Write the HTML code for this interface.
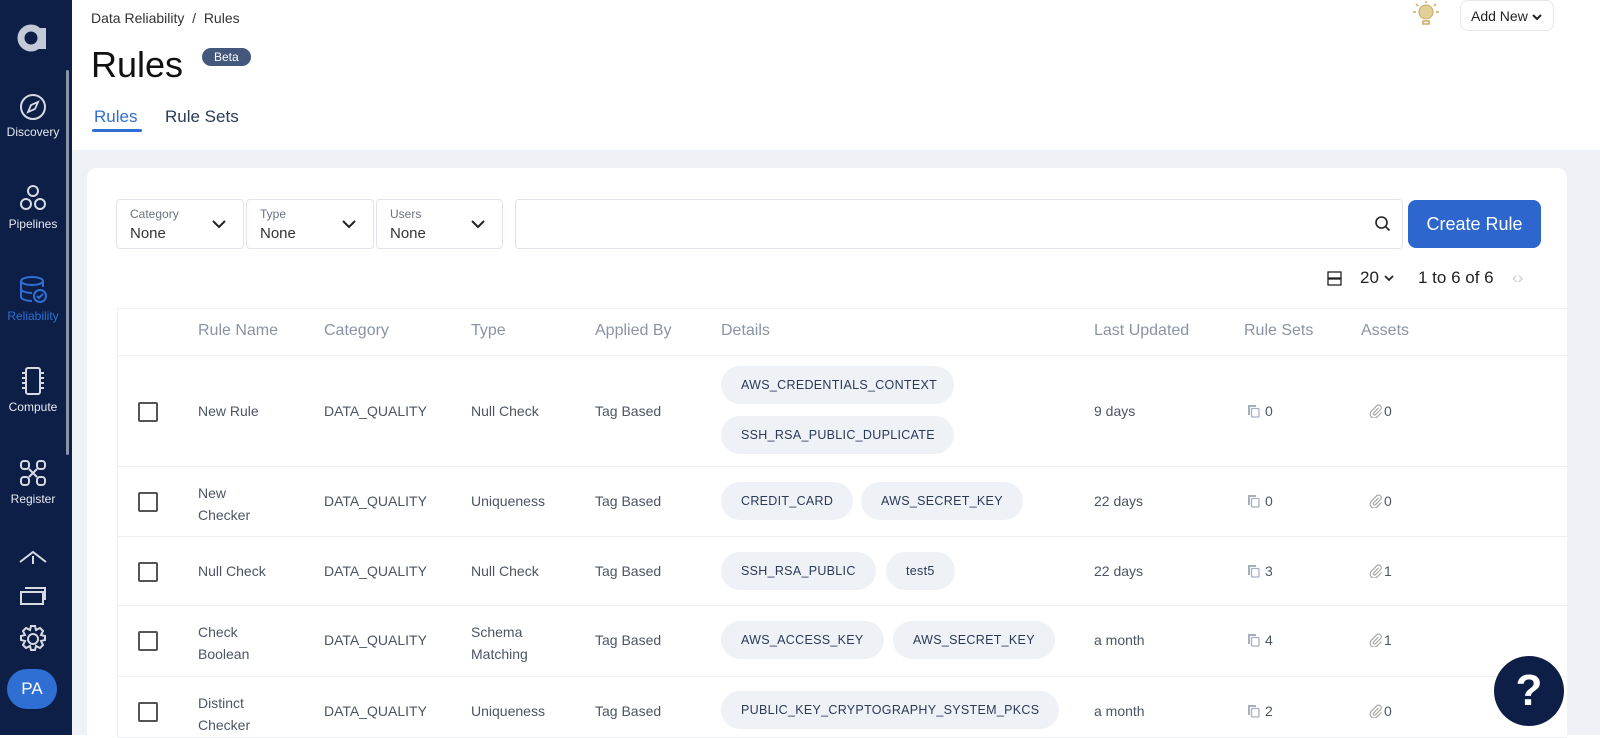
<!DOCTYPE html>
<html><head><meta charset="utf-8"><style>
*{box-sizing:border-box;margin:0;padding:0}
body{width:1600px;height:735px;overflow:hidden;font-family:"Liberation Sans",sans-serif;background:#fff;position:relative;color:#1f2937}
.sb{position:absolute;left:0;top:0;width:72px;height:735px;background:#0d1f47}
.sb .scroll{position:absolute;left:66px;top:70px;width:3px;height:385px;background:#8a93a8;border-radius:2px}
.nav{position:absolute;left:0;width:66px;text-align:center;color:#e6e9f0;font-size:12px}
.nav svg{display:block;margin:0 auto 4px}
.main{position:absolute;left:72px;top:0;right:0;bottom:0}
.bc{position:absolute;left:19px;top:10px;font-size:14px;color:#333}
h1{position:absolute;left:19px;top:44px;font-size:36px;font-weight:400;color:#111}
.beta{position:absolute;left:130px;top:48px;background:#44577d;color:#fff;font-size:12px;padding:2px 12px;border-radius:10px}
.tab{position:absolute;top:107px;font-size:17px;color:#2b3a55}
.grey{position:absolute;left:0;top:150px;right:0;bottom:0;background:#eef1f6}
.card{position:absolute;left:15px;top:18px;width:1480px;bottom:0;background:#fff;border-radius:10px 10px 0 0}
.sel{position:absolute;top:199px;height:50px;width:128px;border:1px solid #dfe3ea;border-radius:4px;background:#fff}
.sel .l{position:absolute;left:13px;top:7px;font-size:12px;color:#6b7280}
.sel .v{position:absolute;left:13px;top:25px;font-size:15px;color:#333}
.sel svg{position:absolute;right:16px;top:19px}
.abs{position:absolute}
.th{position:absolute;top:322px;font-size:16px;color:#8a93a3}
.row{position:absolute;left:117px;width:1450px;border-top:1px solid #eef0f4}
.c{position:absolute;font-size:14px;color:#4b5563}
.c svg{vertical-align:-2px;margin-right:4px}
.cb{position:absolute;left:138px;width:20px;height:20px;border:2px solid #555;border-radius:2px}
.pill{position:absolute;height:38px;border-radius:19px;background:#eef1f6;font-size:12.5px;color:#2b3a55;line-height:38px;padding:0 20px;letter-spacing:.3px}
</style></head><body>
<svg width="0" height="0" style="position:absolute"><defs>
<symbol id="cp" viewBox="0 0 14 14"><path d="M3 1h6v2H3v8H1V1z" fill="#a7afbd"/><rect x="4.5" y="4.5" width="7.5" height="8.5" rx="1" fill="none" stroke="#a7afbd" stroke-width="1.3"/></symbol>
<symbol id="clip" viewBox="0 0 14 14"><path d="M9.5 4L4.5 9a1.3 1.3 0 0 0 1.8 1.8L11.6 5.5a2.7 2.7 0 0 0-3.8-3.8L2.3 7.2a4 4 0 0 0 5.7 5.7L12.5 8.5" fill="none" stroke="#a7a7a7" stroke-width="1.2"/></symbol>
</defs></svg>
<div class="sb">
<div class="scroll"></div>
<div class="nav" style="top:22px"><svg width="34" height="30" viewBox="0 0 34 30"><circle cx="15" cy="16" r="10" fill="none" stroke="#c3c9d6" stroke-width="7"/><rect x="23" y="6" width="7" height="21" fill="#c3c9d6"/></svg></div>
<div class="nav" style="top:93px"><svg width="28" height="28" viewBox="0 0 28 28"><circle cx="14" cy="14" r="12" fill="none" stroke="#d6dae3" stroke-width="2"/><path d="M19 9l-3 7-7 3 3-7z" fill="none" stroke="#d6dae3" stroke-width="1.8"/></svg>Discovery</div>
<div class="nav" style="top:183px"><svg width="30" height="30" viewBox="0 0 30 30"><circle cx="15" cy="8" r="5" fill="none" stroke="#d6dae3" stroke-width="2"/><circle cx="8" cy="21" r="5" fill="none" stroke="#d6dae3" stroke-width="2"/><circle cx="22" cy="21" r="5" fill="none" stroke="#d6dae3" stroke-width="2"/></svg>Pipelines</div>
<div class="nav" style="top:275px;color:#2f6fd4"><svg width="30" height="30" viewBox="0 0 30 30"><ellipse cx="14" cy="6" rx="11" ry="4" fill="none" stroke="#2f6fd4" stroke-width="2"/><path d="M3 6v16c0 2 5 4 11 4M25 6v6M3 14c0 2 5 4 11 4" fill="none" stroke="#2f6fd4" stroke-width="2"/><circle cx="22" cy="21" r="6" fill="none" stroke="#2f6fd4" stroke-width="2"/><path d="M19 21l2 2 4-4" fill="none" stroke="#2f6fd4" stroke-width="2"/></svg>Reliability</div>
<div class="nav" style="top:366px"><svg width="28" height="30" viewBox="0 0 28 30"><rect x="7" y="2" width="14" height="26" rx="2" fill="none" stroke="#d6dae3" stroke-width="2"/><path d="M3 7h4M3 12h4M3 17h4M3 22h4M21 7h4M21 12h4M21 17h4M21 22h4" stroke="#d6dae3" stroke-width="2"/></svg>Compute</div>
<div class="nav" style="top:458px"><svg width="30" height="30" viewBox="0 0 30 30"><rect x="3" y="3" width="8" height="8" rx="3" fill="none" stroke="#d6dae3" stroke-width="2"/><rect x="19" y="3" width="8" height="8" rx="3" fill="none" stroke="#d6dae3" stroke-width="2"/><rect x="3" y="19" width="8" height="8" rx="3" fill="none" stroke="#d6dae3" stroke-width="2"/><rect x="19" y="19" width="8" height="8" rx="3" fill="none" stroke="#d6dae3" stroke-width="2"/><path d="M11 11l8 8M19 11l-8 8" stroke="#d6dae3" stroke-width="2"/></svg>Register</div>
<div class="nav" style="top:548px"><svg width="30" height="20" viewBox="0 0 30 20"><path d="M2 14L15 4l13 10M15 8v8" fill="none" stroke="#d6dae3" stroke-width="2"/></svg></div>
<div class="nav" style="top:584px"><svg width="30" height="24" viewBox="0 0 30 24"><path d="M3 8h22v12H3zM7 4h20v12" fill="none" stroke="#d6dae3" stroke-width="2"/></svg></div>
<div class="nav" style="top:624px"><svg width="30" height="30" viewBox="0 0 30 30"><circle cx="15" cy="15" r="5" fill="none" stroke="#d6dae3" stroke-width="2"/><path d="M13 2h4l1 4 4-2 3 3-2 4 4 1v4l-4 1 2 4-3 3-4-2-1 4h-4l-1-4-4 2-3-3 2-4-4-1v-4l4-1-2-4 3-3 4 2z" fill="none" stroke="#d6dae3" stroke-width="2"/></svg></div>
<div class="abs" style="left:7px;top:669px;width:50px;height:40px;border-radius:20px;background:#2f6fd4;color:#fff;font-size:17px;text-align:center;line-height:40px">PA</div>
</div>
<div class="main">
<div class="bc">Data Reliability &nbsp;/&nbsp; Rules</div>
<h1>Rules</h1><div class="beta">Beta</div>
<div class="tab" style="left:22px;color:#2f6fd4">Rules</div>
<div class="abs" style="left:20px;top:129px;width:50px;height:3px;background:#2f6fd4;border-radius:2px"></div>
<div class="tab" style="left:93px">Rule Sets</div>
<svg class="abs" style="left:1340px;top:0" width="28" height="28" viewBox="0 0 28 28"><circle cx="14" cy="12" r="7" fill="#e3cf9a" stroke="#c9a95c"/><path d="M14 1v2M4 4l2 2M24 4l-2 2M1 12h3M24 12h3M11 21h6v3h-6z" stroke="#c9a95c" stroke-width="1.5" fill="none"/></svg>
<div class="abs" style="left:1388px;top:0;width:94px;height:31px;border:1px solid #e5e7eb;border-radius:8px;font-size:14px;line-height:30px;padding-left:10px;color:#222">Add New <svg width="10" height="8" style="vertical-align:0"><path d="M1 2l4 4 4-4" fill="none" stroke="#222" stroke-width="2"/></svg></div>
<div class="grey"><div class="card"></div></div>
</div>
<div class="sel" style="left:116px"><div class="l">Category</div><div class="v">None</div><svg width="16" height="10"><path d="M2 2l6 6 6-6" fill="none" stroke="#222" stroke-width="2"/></svg></div>
<div class="sel" style="left:246px"><div class="l">Type</div><div class="v">None</div><svg width="16" height="10"><path d="M2 2l6 6 6-6" fill="none" stroke="#222" stroke-width="2"/></svg></div>
<div class="sel" style="left:376px;width:127px"><div class="l">Users</div><div class="v">None</div><svg width="16" height="10"><path d="M2 2l6 6 6-6" fill="none" stroke="#222" stroke-width="2"/></svg></div>
<div class="abs" style="left:515px;top:199px;width:888px;height:50px;border:1px solid #dfe3ea;border-radius:4px"><svg class="abs" style="right:10px;top:15px" width="18" height="18"><circle cx="7.5" cy="7.5" r="5.5" fill="none" stroke="#222" stroke-width="1.6"/><path d="M11.5 11.5l4 4" stroke="#222" stroke-width="1.6"/></svg></div>
<div class="abs" style="left:1408px;top:200px;width:133px;height:48px;background:#2d66cc;border-radius:8px;color:#fff;font-size:18px;text-align:center;line-height:48px">Create Rule</div>
<svg class="abs" style="left:1327px;top:271px" width="16" height="16"><rect x="1" y="1" width="13" height="6" fill="none" stroke="#222" stroke-width="1.3"/><rect x="1" y="8" width="13" height="6" fill="none" stroke="#222" stroke-width="1.3"/></svg>
<div class="c abs" style="left:1360px;top:268px;font-size:17px;color:#222">20 <svg width="10" height="8" style="vertical-align:1px"><path d="M1 2l4 4 4-4" fill="none" stroke="#222" stroke-width="1.8"/></svg></div>
<div class="c abs" style="left:1418px;top:268px;font-size:17px;color:#222">1 to 6 of 6</div>
<div class="c abs" style="left:1512px;top:268px;font-size:17px;color:#ccc">‹›</div>
<div class="abs" style="left:117px;top:308px;width:1450px;height:430px;border:1px solid #eef0f4;border-right:none"></div>
<div class="th" style="left:198px">Rule Name</div><div class="th" style="left:324px">Category</div><div class="th" style="left:471px">Type</div><div class="th" style="left:595px">Applied By</div><div class="th" style="left:721px">Details</div><div class="th" style="left:1094px">Last Updated</div><div class="th" style="left:1244px">Rule Sets</div><div class="th" style="left:1361px">Assets</div>
<div class="row" style="top:355px"></div><div class="row" style="top:466px"></div><div class="row" style="top:536px"></div><div class="row" style="top:605px"></div><div class="row" style="top:676px"></div>

<div class="cb" style="top:402px"></div><div class="c" style="left:198px;top:403px">New Rule</div><div class="c" style="left:324px;top:403px">DATA_QUALITY</div><div class="c" style="left:471px;top:403px">Null Check</div><div class="c" style="left:595px;top:403px">Tag Based</div>
<div class="pill" style="left:721px;top:366px;width:233px">AWS_CREDENTIALS_CONTEXT</div><div class="pill" style="left:721px;top:416px;width:233px">SSH_RSA_PUBLIC_DUPLICATE</div>
<div class="c" style="left:1094px;top:403px">9 days</div>

<div class="cb" style="top:492px"></div><div class="c" style="left:198px;top:482px;line-height:22px">New<br>Checker</div><div class="c" style="left:324px;top:493px">DATA_QUALITY</div><div class="c" style="left:471px;top:493px">Uniqueness</div><div class="c" style="left:595px;top:493px">Tag Based</div>
<div class="pill" style="left:721px;top:482px">CREDIT_CARD</div><div class="pill" style="left:861px;top:482px">AWS_SECRET_KEY</div>
<div class="c" style="left:1094px;top:493px">22 days</div>

<div class="cb" style="top:562px"></div><div class="c" style="left:198px;top:563px">Null Check</div><div class="c" style="left:324px;top:563px">DATA_QUALITY</div><div class="c" style="left:471px;top:563px">Null Check</div><div class="c" style="left:595px;top:563px">Tag Based</div>
<div class="pill" style="left:721px;top:552px">SSH_RSA_PUBLIC</div><div class="pill" style="left:886px;top:552px">test5</div>
<div class="c" style="left:1094px;top:563px">22 days</div>

<div class="cb" style="top:631px"></div><div class="c" style="left:198px;top:621px;line-height:22px">Check<br>Boolean</div><div class="c" style="left:324px;top:632px">DATA_QUALITY</div><div class="c" style="left:471px;top:621px;line-height:22px">Schema<br>Matching</div><div class="c" style="left:595px;top:632px">Tag Based</div>
<div class="pill" style="left:721px;top:621px">AWS_ACCESS_KEY</div><div class="pill" style="left:893px;top:621px">AWS_SECRET_KEY</div>
<div class="c" style="left:1094px;top:632px">a month</div>

<div class="cb" style="top:702px"></div><div class="c" style="left:198px;top:692px;line-height:22px">Distinct<br>Checker</div><div class="c" style="left:324px;top:703px">DATA_QUALITY</div><div class="c" style="left:471px;top:703px">Uniqueness</div><div class="c" style="left:595px;top:703px">Tag Based</div>
<div class="pill" style="left:721px;top:691px">PUBLIC_KEY_CRYPTOGRAPHY_SYSTEM_PKCS</div>
<div class="c" style="left:1094px;top:703px">a month</div>

<div class="c" style="left:1247px;top:403px"><svg width="14" height="14"><use href="#cp"/></svg>0</div><div class="c" style="left:1369px;top:403px"><svg width="14" height="14" style="margin-right:1px"><use href="#clip"/></svg>0</div>
<div class="c" style="left:1247px;top:493px"><svg width="14" height="14"><use href="#cp"/></svg>0</div><div class="c" style="left:1369px;top:493px"><svg width="14" height="14" style="margin-right:1px"><use href="#clip"/></svg>0</div>
<div class="c" style="left:1247px;top:563px"><svg width="14" height="14"><use href="#cp"/></svg>3</div><div class="c" style="left:1369px;top:563px"><svg width="14" height="14" style="margin-right:1px"><use href="#clip"/></svg>1</div>
<div class="c" style="left:1247px;top:632px"><svg width="14" height="14"><use href="#cp"/></svg>4</div><div class="c" style="left:1369px;top:632px"><svg width="14" height="14" style="margin-right:1px"><use href="#clip"/></svg>1</div>
<div class="c" style="left:1247px;top:703px"><svg width="14" height="14"><use href="#cp"/></svg>2</div><div class="c" style="left:1369px;top:703px"><svg width="14" height="14" style="margin-right:1px"><use href="#clip"/></svg>0</div>

<div class="abs" style="left:1494px;top:656px;width:70px;height:70px;border-radius:50%;background:#0d1f47;color:#fff;font-size:44px;font-weight:bold;text-align:center;line-height:70px">?</div>
</body></html>
